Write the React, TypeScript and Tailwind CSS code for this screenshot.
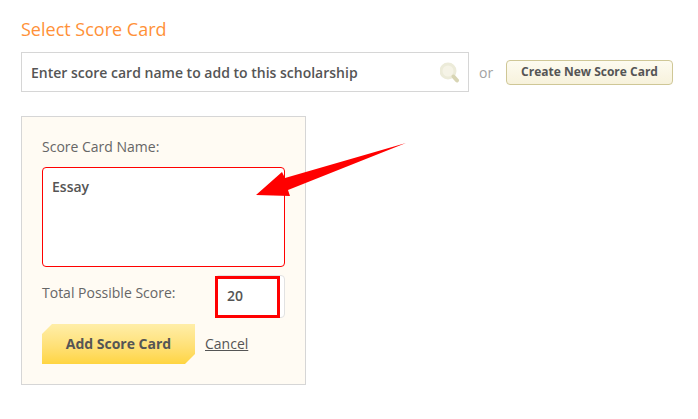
export default function App() {
  return (
    <div className="relative h-[419px] w-[698px] overflow-hidden bg-white pl-[21px] pt-[17px] font-['Open_Sans',sans-serif] text-[#555]">
      <h2 className="h-[35px] text-[18px] leading-[24px] text-[#ff9138]">Select Score Card</h2>
      <div className="flex items-center">
        <div className="flex h-10 w-[448px] items-center justify-between border border-[#d6d6d6] pl-[9px] pr-[8px] text-[14px] font-semibold text-[#555]">
          <span className="mt-[1px]">Enter score card name to add to this scholarship</span>
          <svg width="20" height="24" viewBox="0 0 20 24" className="mt-[3px]">
            <circle cx="8" cy="9" r="7" fill="#f5f3e6" stroke="#ecebd9" strokeWidth="3" />
            <path d="M13.5 14.5 L17 18.5" stroke="#d8d5b4" strokeWidth="4" strokeLinecap="round" />
          </svg>
        </div>
        <span className="ml-[10px] w-[27px] text-[14px] text-[#a3a3a3]">or</span>
        <button className="h-[25px] w-[167px] rounded-[4px] border border-[#cfc796] bg-gradient-to-b from-[#fdfbf0] to-[#f7f2dc] text-[12px] font-bold text-[#555]">
          Create New Score Card
        </button>
      </div>
      <div className="mt-6 h-[269px] w-[285px] border border-[#d6d6d6] bg-[#fffbf3] pl-5 pt-[20px]">
        <div className="h-[30px] text-[14px] leading-5 text-[#666]">Score Card Name:</div>
        <div className="h-[100px] w-[243px] rounded-[4px] border border-[#ff0000] bg-white px-[9px] py-[9px] text-[14px] font-semibold leading-5 text-[#555]">
          Essay
        </div>
        <div className="mt-2 flex h-[43px] w-[243px] items-start justify-between">
          <span className="mt-2 text-[14px] leading-5 text-[#666]">Total Possible Score:</span>
          <div className="relative h-[43px] w-[70px] rounded-[4px] border border-[#e2e2e2] bg-white pl-[11px] pt-[10px] text-[14px] font-semibold leading-5 text-[#555]">
            20
            <div className="absolute left-[-1px] top-0 h-[42px] w-[65px] border-[3px] border-[#ff0000]" />
          </div>
        </div>
        <div className="mt-[6px] flex items-center">
          <button className="h-10 w-[153px] bg-gradient-to-b from-[#ffeea8] to-[#ffd53f] pb-[1px] text-[14px] font-bold text-[#555] [clip-path:polygon(10px_0,100%_0,100%_30px,143px_100%,0_100%,0_10px)]">
            Add Score Card
          </button>
          <a className="ml-[10px] mt-[-1px] text-[14px] text-[#555] underline">Cancel</a>
        </div>
      </div>
      <svg className="absolute left-[250px] top-[138px]" width="160" height="64" viewBox="250 138 160 64">
        <path d="M406 143 L285 178 L282 172 L256 195 L290 196 L288 190 Z" fill="#ff0000" />
      </svg>
    </div>
  );
}
